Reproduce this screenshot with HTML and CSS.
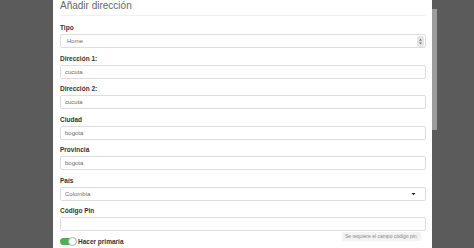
FILE: index.html
```html
<!DOCTYPE html>
<html lang="es">
<head>
    <meta charset="UTF-8">
    <meta name="viewport" content="width=device-width, initial-scale=1.0">
    <title>Añadir dirección</title>
    <link rel="stylesheet" href="styles.css">
</head>
<body>
    <div class="modal">
        <div class="modal-header">
            <h4 class="modal-title">Añadir dirección</h4>
        </div>
        <form class="modal-body">
            <div class="form-group">
                <label>Tipo</label>
                <div class="select-box listbox">
                    <span>Home</span>
                    <span class="spin">
                        <svg width="5" height="9" viewBox="0 0 5 9">
                            <path d="M1 3.5 L2.5 2 L4 3.5 Z" fill="#555"/>
                            <path d="M1 5.5 L2.5 7 L4 5.5 Z" fill="#555"/>
                        </svg>
                    </span>
                </div>
            </div>
            <div class="form-group">
                <label>Dirección 1:</label>
                <div class="form-control">cucuta</div>
            </div>
            <div class="form-group">
                <label>Dirección 2:</label>
                <div class="form-control">cucuta</div>
            </div>
            <div class="form-group">
                <label>Ciudad</label>
                <div class="form-control">bogota</div>
            </div>
            <div class="form-group">
                <label>Provincia</label>
                <div class="form-control">bogota</div>
            </div>
            <div class="form-group">
                <label>País</label>
                <div class="select-box">
                    <span>Colombia</span>
                    <svg class="caret" width="5" height="4" viewBox="0 0 5 4">
                        <path d="M0.5 1 L4.5 1 L2.5 3.2 Z" fill="#222"/>
                    </svg>
                </div>
            </div>
            <div class="form-group pin-group">
                <label>Código Pin</label>
                <div class="form-control"></div>
                <div class="help-tip">Se requiere el campo código pin.</div>
            </div>
            <div class="switch-row">
                <span class="switch"><span class="knob"></span></span>
                <span class="switch-label">Hacer primaria</span>
            </div>
        </form>
    </div>
    <div class="scrollbar"></div>
</body>
</html>
```

FILE: styles.css
```css
body {
    margin: 0;
    padding: 0;
    height: 248px;
    overflow: hidden;
    background-color: #5b5b5b;
    font-family: "Liberation Sans", Arial, sans-serif;
    display: flex;
    align-items: flex-start;
}

.modal {
    margin-left: 53px;
    width: 379px;
    height: 248px;
    background-color: #ffffff;
}

.scrollbar {
    width: 5px;
    height: 121px;
    margin-top: 9px;
    background-color: #9c9c9c;
}

.modal-header {
    height: 15px;
    margin: 0 7px;
    border-bottom: 1px solid #f0f0f0;
}

.modal-title {
    margin: 0;
    font-size: 10px;
    line-height: 12px;
    font-weight: normal;
    color: #666;
}

.modal-body {
    padding: 7px 6px 0 7px;
}

.form-group {
    margin-bottom: 5.5px;
}

label {
    display: block;
    font-size: 6.5px;
    line-height: 9px;
    font-weight: bold;
    color: #333;
    margin-bottom: 2px;
}

.form-control,
.select-box {
    box-sizing: border-box;
    height: 14px;
    border: 1px solid #dddddd;
    border-radius: 2px;
    padding: 0 4px;
    font-size: 6px;
    line-height: 12px;
    color: #6a6a6a;
    background-color: #fff;
}

.select-box {
    display: flex;
    align-items: center;
    justify-content: space-between;
}

.listbox {
    padding: 0 0 0 6px;
}

.spin {
    width: 7px;
    height: 11px;
    margin-right: 1px;
    background-color: #e4e4e4;
    border-radius: 2px;
    display: flex;
    align-items: center;
    justify-content: center;
}

.caret {
    margin-right: 5px;
}

.pin-group {
    position: relative;
}

.help-tip {
    position: absolute;
    top: 100%;
    right: 5px;
    margin-top: 1px;
    padding: 0 3px;
    height: 9px;
    line-height: 9px;
    font-size: 5px;
    color: #888;
    background-color: #f3f3f3;
    border-radius: 1px;
}

.switch-row {
    display: flex;
    align-items: center;
    height: 9px;
}

.switch {
    position: relative;
    width: 16px;
    height: 7px;
    border-radius: 4px;
    background-color: #4fae50;
}

.knob {
    position: absolute;
    right: -1px;
    top: -0.5px;
    width: 7px;
    height: 7px;
    border-radius: 50%;
    background-color: #fff;
    border: 0.5px solid #aaa;
}

.switch-label {
    margin-left: 2px;
    font-size: 6.5px;
    font-weight: bold;
    color: #333;
}
```
